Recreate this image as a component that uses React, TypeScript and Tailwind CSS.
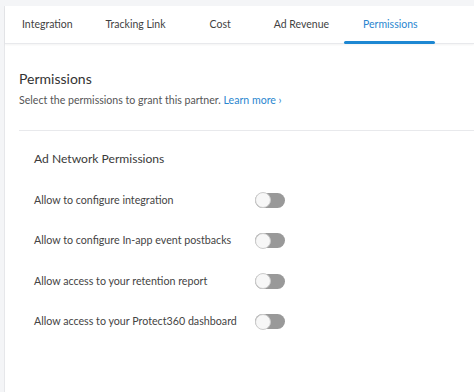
import React from 'react';

const tabs = [
  { label: 'Integration', cls: 'pl-[17px] pr-[16px]' },
  { label: 'Tracking Link', cls: 'pl-[17px] pr-[22px]' },
  { label: 'Cost', cls: 'pl-[22px] pr-[21px]' },
  { label: 'Ad Revenue', cls: 'pl-[22px] pr-[15px]' },
  { label: 'Permissions', cls: 'pl-[19px] pr-[17px]', active: true },
];

const permissions = [
  'Allow to configure integration',
  'Allow to configure In-app event postbacks',
  'Allow access to your retention report',
  'Allow access to your Protect360 dashboard',
];

const Toggle = () => (
  <div className="relative w-[30px] h-[15px] rounded-full bg-[#999999]">
    <div className="absolute left-0 top-[-0.5px] w-[16px] h-[16px] rounded-full bg-[#f7f7f7] border border-[#cccccc]" />
  </div>
);

export default function App() {
  return (
    <div
      className="w-[474px] h-[392px] bg-[#f4f5f7] pt-[6px] pl-[4px] overflow-hidden"
      style={{ fontFamily: 'Lato, "Open Sans", sans-serif' }}
    >
      <div className="h-full bg-white border-l border-[#e6e7ea] flex flex-col">
        {/* tab bar */}
        <div className="h-[38px] flex border-b border-[#e8e9ec] shadow-[0_1px_2px_rgba(0,0,0,0.05)]">
          {tabs.map((t) => (
            <div
              key={t.label}
              className={`relative flex items-center text-[10.5px] ${t.cls} ${
                t.active ? 'text-[#2a86cf]' : 'text-[#3f3f3f]'
              }`}
            >
              {t.label}
              {t.active && (
                <div className="absolute left-0 right-0 bottom-[-1px] h-[3px] rounded-full bg-[#1d87d2]" />
              )}
            </div>
          ))}
        </div>

        {/* header */}
        <div className="pl-[14px] pt-[25px]">
          <div className="text-[14px] text-[#333] leading-[20px]">Permissions</div>
          <div className="mt-[3px] text-[10.6px] text-[#555] leading-[16px]">
            Select the permissions to grant this partner.{' '}
            <span className="text-[#2a86cf]">Learn more ›</span>
          </div>
        </div>

        <div className="ml-[14px] mt-[22px] border-t border-[#e8e9ec]" />

        {/* permissions */}
        <div className="pl-[29px] pt-[19px]">
          <div className="text-[12.1px] text-[#3a3a3a] leading-[18px]">Ad Network Permissions</div>
          <div className="mt-[24px] flex flex-col gap-[24.5px]">
            {permissions.map((p) => (
              <div key={p} className="flex items-center h-[16px]">
                <div className="w-[221px] text-[10.7px] text-[#444]">{p}</div>
                <Toggle />
              </div>
            ))}
          </div>
        </div>
      </div>
    </div>
  );
}
